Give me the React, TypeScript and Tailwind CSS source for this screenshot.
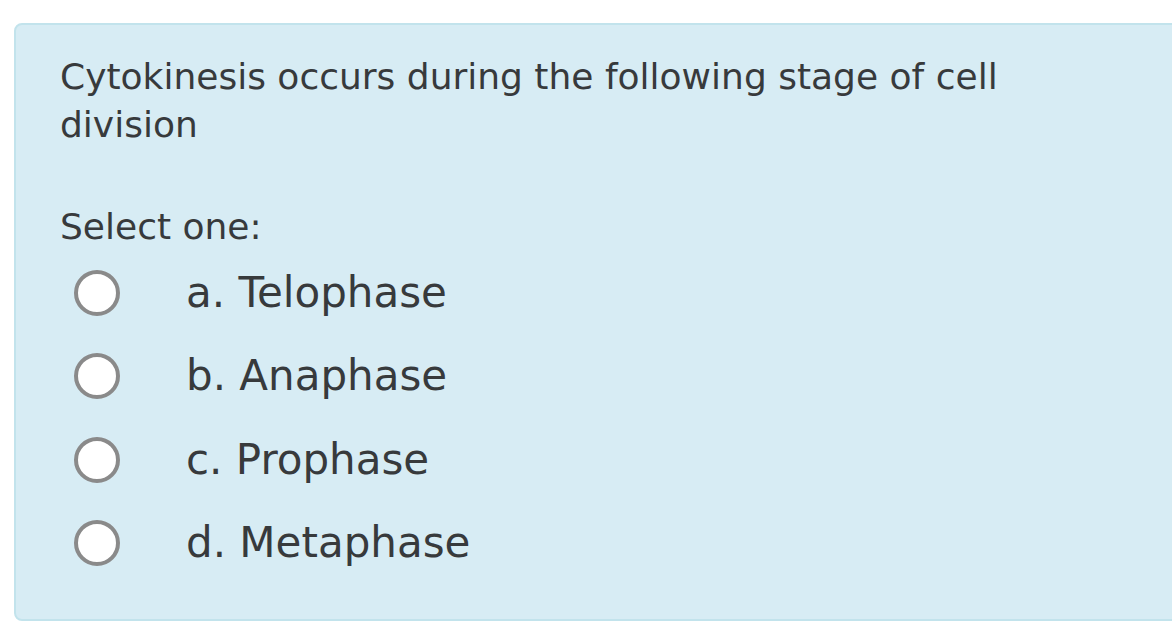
const options = ["a. Telophase", "b. Anaphase", "c. Prophase", "d. Metaphase"];

export default function App() {
  return (
    <div className="w-[1172px] h-[621px] bg-white overflow-hidden pt-[23px] pl-[14px]" style={{ fontFamily: '"DejaVu Sans", Verdana, sans-serif' }}>
      <div className="w-[1200px] h-[598px] rounded-[8px] border-2 border-[#c2e3ec] bg-[#d7ecf4] pl-[44px] pt-[28px] text-[#373a3c]">
        <p className="text-[36px] leading-[48px] w-[1000px]">
          Cytokinesis occurs during the following stage of cell
          <br />
          division
        </p>
        <p className="text-[36px] leading-[48px] mt-[54px]">Select one:</p>
        <div className="mt-0 flex flex-col">
          {options.map((o) => (
            <div key={o} className="h-[83.5px] flex items-center">
              <div className="ml-[14px] w-[46px] h-[46px] rounded-full border-[4px] border-[#8a8a8a] bg-white" />
              <span className="ml-[66px] text-[42px] leading-[50px]">{o}</span>
            </div>
          ))}
        </div>
      </div>
    </div>
  );
}
